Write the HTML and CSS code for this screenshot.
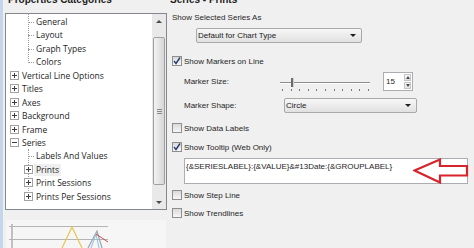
FILE: index.html
```html
<!DOCTYPE html>
<html lang="en">
<head>
    <meta charset="UTF-8">
    <title>Chart Properties</title>
    <link rel="stylesheet" href="styles.css">
</head>
<body>
<div class="window">

    <!-- left side: categories tree -->
    <section class="categories">
        <h2 class="pane-title">Properties Categories</h2>
        <div class="tree-box">
            <div class="tree">
                <div class="branch first">
                    <div class="row sub">General</div>
                    <div class="row sub">Layout</div>
                    <div class="row sub">Graph Types</div>
                    <div class="row sub">Colors</div>
                </div>
                <div class="row top"><span class="toggle"></span>Vertical Line Options</div>
                <div class="row top"><span class="toggle"></span>Titles</div>
                <div class="row top"><span class="toggle"></span>Axes</div>
                <div class="row top"><span class="toggle"></span>Background</div>
                <div class="row top"><span class="toggle"></span>Frame</div>
                <div class="row top"><span class="toggle open"></span>Series</div>
                <div class="branch">
                    <div class="row sub">Labels And Values</div>
                    <div class="row sub-node"><span class="toggle"></span><span class="selected">Prints</span></div>
                    <div class="row sub-node"><span class="toggle"></span>Print Sessions</div>
                    <div class="row sub-node"><span class="toggle"></span>Prints Per Sessions</div>
                </div>
            </div>
            <div class="scrollbar">
                <div class="sb-btn"><span class="arrow-up"></span></div>
                <div class="thumb"><span class="grip"></span></div>
                <div class="sb-space"></div>
                <div class="sb-btn"><span class="arrow-down"></span></div>
            </div>
        </div>
        <svg class="preview" width="165" height="34" viewBox="3 214 165 34">
            <rect x="6" y="220" width="160" height="28" fill="#f6f6f6"/>
            <line x1="12" y1="224" x2="12" y2="248" stroke="#8c8c8c"/>
            <line x1="9" y1="226.5" x2="108" y2="226.5" stroke="#b4b4b4"/>
            <line x1="9" y1="239.5" x2="108" y2="239.5" stroke="#b4b4b4"/>
            <polyline points="62,248 72,227 82,248" fill="none" stroke="#e6c653" stroke-width="1.2"/>
            <polyline points="88,248 97,231 102,248" fill="none" stroke="#9aa3b8" stroke-width="1.2"/>
            <polyline points="91,248 96,234 99,248" fill="none" stroke="#8fc3d6" stroke-width="1"/>
            <line x1="96" y1="234" x2="108" y2="242" stroke="#c0504d" stroke-width="1"/>
        </svg>
    </section>

    <!-- right side: series properties -->
    <section class="props">
        <h2 class="pane-title">Series - Prints</h2>

        <div class="label-row">Show Selected Series As</div>
        <div class="select wide">
            <span>Default for Chart Type</span>
            <span class="caret"></span>
        </div>

        <div class="check-row markers">
            <span class="box checked"></span>Show Markers on Line
        </div>

        <div class="field-row size-row">
            <span class="field-label">Marker Size:</span>
            <div class="slider">
                <span class="slider-line"></span>
                <span class="slider-ticks"></span>
                <span class="slider-thumb"></span>
            </div>
            <div class="spin">
                <span class="spin-value">15</span>
                <span class="spin-btns">
                    <span class="spin-btn"><span class="arrow-up small"></span></span>
                    <span class="spin-btn"><span class="arrow-down small"></span></span>
                </span>
            </div>
        </div>

        <div class="field-row shape-row">
            <span class="field-label">Marker Shape:</span>
            <div class="select shape">
                <span>Circle</span>
                <span class="caret"></span>
            </div>
        </div>

        <div class="check-row data-labels">
            <span class="box"></span>Show Data Labels
        </div>
        <div class="check-row tooltip">
            <span class="box checked"></span>Show Tooltip (Web Only)
        </div>

        <div class="tooltip-field">
            <div class="text-box">{&amp;SERIESLABEL}:{&amp;VALUE}&amp;#13Date:{&amp;GROUPLABEL}</div>
            <svg class="callout" width="56" height="26" viewBox="0 0 56 26">
                <polygon points="1.5,12.5 27,1.5 27,8 54,8 54,17.5 27,17.5 27,24.5" fill="none" stroke="#d9232b" stroke-width="2.2"/>
            </svg>
        </div>

        <div class="check-row step">
            <span class="box"></span>Show Step Line
        </div>
        <div class="check-row trend">
            <span class="box"></span>Show Trendlines
        </div>
    </section>

</div>
</body>
</html>
```

FILE: styles.css
```css
body {
    margin: 0;
    background-color: #f0f0f0;
    font-family: "Liberation Sans", Arial, sans-serif;
    color: #262626;
}
.window {
    display: flex;
    width: 474px;
    height: 248px;
    overflow: hidden;
}
.pane-title {
    margin: -5px 0 0 3px;
    height: 10px;
    font-size: 10px;
    line-height: 10px;
    font-weight: bold;
    color: #1e1e1e;
    white-space: nowrap;
}

/* left pane */
.categories {
    width: 163px;
    flex: none;
    border-left: 3px solid #c4d6ea;
    padding-left: 2px;
}
.tree-box {
    margin-top: 8px;
    width: 160px;
    height: 195px;
    border: 1px solid #828790;
    background-color: white;
    display: flex;
}
.tree {
    flex: 1;
    padding-top: 1px;
    font-family: "Open Sans", "Liberation Sans", sans-serif;
    font-size: 8.5px;
    color: #1e1e1e;
}
.row {
    position: relative;
    height: 13.45px;
    line-height: 13.45px;
    display: flex;
    align-items: center;
    white-space: nowrap;
}
.row.top {
    padding-left: 4px;
}
.row.sub {
    padding-left: 30px;
}
.row.sub-node {
    padding-left: 18px;
}
.row.sub::before {
    content: "";
    position: absolute;
    left: 22px;
    top: 7px;
    width: 6px;
    border-top: 1px dotted #9c9c9c;
}
.branch {
    position: relative;
}
.branch::before {
    content: "";
    position: absolute;
    left: 22px;
    top: 0;
    bottom: 6px;
    border-left: 1px dotted #9c9c9c;
}
.branch.first::before {
    top: -2px;
}
.toggle {
    position: relative;
    flex: none;
    width: 7px;
    height: 7px;
    margin-right: 3px;
    border: 1px solid #a2a2a2;
    background:
        linear-gradient(#3c3c3c, #3c3c3c) center / 5px 1px no-repeat,
        linear-gradient(#3c3c3c, #3c3c3c) center / 1px 5px no-repeat,
        white;
}
.toggle.open {
    background:
        linear-gradient(#3c3c3c, #3c3c3c) center / 5px 1px no-repeat,
        white;
}
.selected {
    background-color: #efefef;
    padding: 0 2px;
    margin-left: -2px;
    line-height: 12px;
}
.scrollbar {
    width: 14px;
    background-color: #e9e9e9;
    display: flex;
    flex-direction: column;
    align-items: center;
}
.sb-btn {
    height: 14px;
    width: 14px;
    display: flex;
    align-items: center;
    justify-content: center;
}
.arrow-up {
    border-left: 3px solid transparent;
    border-right: 3px solid transparent;
    border-bottom: 3px solid #4a4a4a;
}
.arrow-down {
    border-left: 3px solid transparent;
    border-right: 3px solid transparent;
    border-top: 3px solid #4a4a4a;
}
.arrow-up.small, .arrow-down.small {
    border-left-width: 2px;
    border-right-width: 2px;
}
.thumb {
    margin-top: 9px;
    width: 10px;
    height: 146px;
    border: 1px solid #a0a0a0;
    border-radius: 2px;
    background: linear-gradient(90deg, #f3f3f3, #d6d6d6);
    display: flex;
    align-items: center;
    justify-content: center;
}
.grip {
    width: 5px;
    height: 5px;
    background: repeating-linear-gradient(#8a8a8a 0 1px, transparent 1px 2px);
}
.sb-space {
    flex: 1;
}
.preview {
    display: block;
    margin-left: -2px;
    margin-top: 4px;
}

/* right pane */
.props {
    flex: 1;
    padding-left: 4px;
    font-size: 8px;
}
.props .pane-title {
    margin-left: -2px;
}
.label-row {
    margin-top: 7px;
    height: 12px;
    line-height: 12px;
}
.select {
    box-sizing: border-box;
    height: 15px;
    border: 1px solid #a9a9a9;
    border-radius: 2px;
    background: linear-gradient(#f7f7f7, #e1e1e1);
    display: flex;
    align-items: center;
    justify-content: space-between;
    padding: 0 5px 0 1px;
    color: #202020;
}
.select.wide {
    margin: 4px 0 0 24px;
    width: 166px;
}
.select.shape {
    width: 133px;
}
.caret {
    border-left: 3px solid transparent;
    border-right: 3px solid transparent;
    border-top: 3px solid #1e1e1e;
}
.check-row {
    display: flex;
    align-items: center;
    gap: 2px;
    height: 12px;
}
.box {
    box-sizing: border-box;
    width: 10px;
    height: 10px;
    border: 1px solid #8e8f8f;
    background: linear-gradient(#dadada, #f7f7f7);
}
.box.checked {
    background:
        url("data:image/svg+xml;utf8,<svg xmlns='http://www.w3.org/2000/svg' width='8' height='8'><path d='M1 4 L3 6.5 L7 0.5' fill='none' stroke='%23283c6e' stroke-width='1.4'/></svg>") center no-repeat,
        linear-gradient(#dadada, #f7f7f7);
}
.markers { margin-top: 12px; }
.data-labels { margin-top: 9px; }
.tooltip { margin-top: 7px; }
.step { margin-top: 5px; }
.trend { margin-top: 6px; }
.field-row {
    display: flex;
    align-items: center;
    margin-left: 12px;
}
.size-row {
    margin-top: 5px;
    height: 19px;
}
.shape-row {
    margin-top: 7px;
    height: 15px;
}
.size-row .field-label {
    width: 96px;
}
.shape-row .field-label {
    width: 100px;
}
.slider {
    position: relative;
    width: 90px;
    height: 19px;
    margin-right: 13px;
    display: flex;
    flex-direction: column;
}
.slider-line {
    margin-top: 10px;
    height: 0;
    border-top: 1px solid #8c8c8c;
    border-bottom: 1px solid white;
}
.slider-ticks {
    margin: 5px 0 0 2px;
    width: 88px;
    height: 2px;
    background: repeating-linear-gradient(90deg, #7a7a7a 0 1px, transparent 1px 8.6px);
}
.slider-thumb {
    position: absolute;
    left: 11px;
    top: 6px;
    width: 2px;
    height: 9px;
    background-color: #6c6c6c;
    border-right: 1px solid #d0d0d0;
}
.spin {
    box-sizing: border-box;
    width: 30px;
    height: 19px;
    border: 1px solid #abadb3;
    background-color: white;
    display: flex;
    justify-content: space-between;
}
.spin-value {
    padding-left: 2px;
    line-height: 17px;
}
.spin-btns {
    display: flex;
    flex-direction: column;
    gap: 1px;
    padding: 1px;
}
.spin-btn {
    box-sizing: border-box;
    width: 7px;
    height: 7px;
    border: 1px solid #c4c4c4;
    background: linear-gradient(#f8f8f8, #e4e4e4);
    display: flex;
    align-items: center;
    justify-content: center;
}
.tooltip-field {
    position: relative;
    margin: 5px 0 0 12px;
    width: 284px;
}
.text-box {
    box-sizing: border-box;
    height: 26px;
    border: 1px solid #abadb3;
    background-color: white;
    padding: 3px 1px;
    line-height: 10px;
    color: #1e1e1e;
    white-space: nowrap;
}
.callout {
    position: absolute;
    left: 229px;
    top: 0;
}
```
